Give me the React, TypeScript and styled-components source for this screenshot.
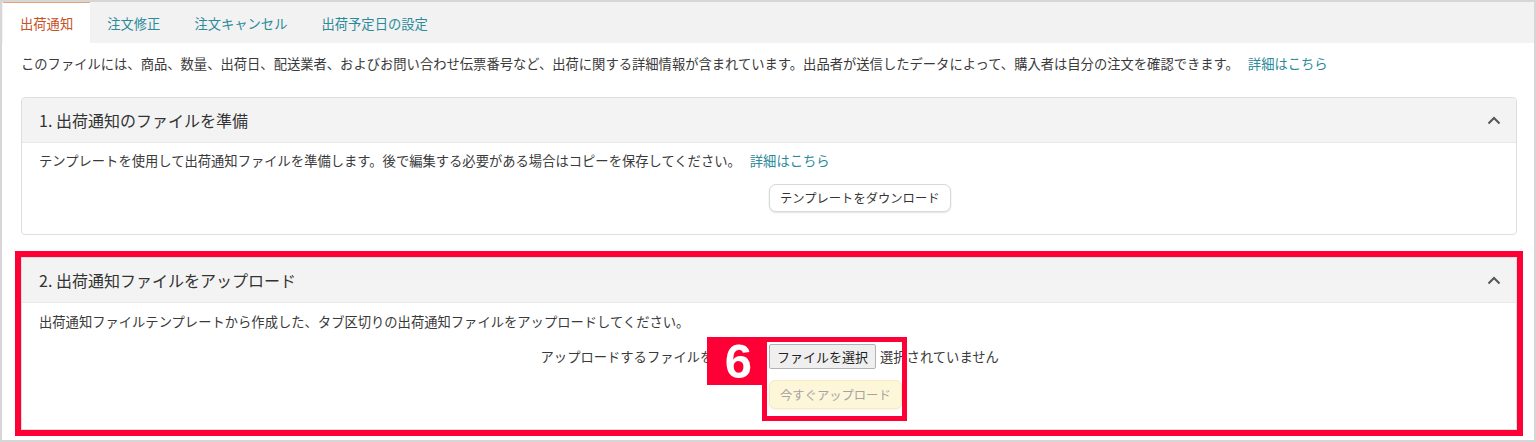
import React from 'react'
import styled, { createGlobalStyle } from 'styled-components'

// Global
const GlobalStyle = createGlobalStyle`
  html, body {
    margin: 0;
    padding: 0;
    background: #fff;
    overflow: hidden;
  }
  body {
    font-family: "Noto Sans CJK JP", "Noto Sans", sans-serif;
    color: #3a3a3a;
  }
`

const HIGHLIGHT = '#fe0035'
const LINK = '#2b8a9b'

// Styled Components
const Frame = styled.div`
  width: 1536px;
  height: 442px;
  box-sizing: border-box;
  border: 2px solid #d6d6d6;
  display: flex;
  flex-direction: column;
`

const TabBar = styled.div`
  display: flex;
  height: 41px;
  padding-left: 1px;
  background: #f2f2f2;
`

const Tab = styled.div<{ $active?: boolean }>`
  display: flex;
  align-items: center;
  padding: 0 17px;
  font-size: 13.3px;
  color: ${({ $active }) => ($active ? '#c7511f' : LINK)};
  background: ${({ $active }) => ($active ? '#fff' : 'transparent')};
  border-top: 1px solid ${({ $active }) => ($active ? '#e9a27a' : 'transparent')};
`

const Content = styled.div`
  padding: 0 17px 0 19px;
`

const Intro = styled.p`
  margin: 0;
  padding-top: 11px;
  font-size: 13.3px;
  line-height: 20px;
  color: #3a3a3a;
`

const Link = styled.a`
  color: ${LINK};
  text-decoration: none;
  margin-left: 9px;
`

const Panel = styled.section<{ $highlight?: boolean }>`
  margin-top: ${({ $highlight }) => ($highlight ? '22px' : '23px')};
  border: 1px solid #dedede;
  border-radius: ${({ $highlight }) => ($highlight ? '0' : '4px')};
  outline: ${({ $highlight }) => ($highlight ? `6px solid ${HIGHLIGHT}` : 'none')};
`

const PanelHeader = styled.header<{ $highlight?: boolean }>`
  height: 44px;
  display: flex;
  align-items: center;
  justify-content: space-between;
  padding: 0 17px;
  background: #f3f3f3;
  border-bottom: 1px solid #e8e8e8;
  font-size: 16px;
  color: #333;
  border-radius: ${({ $highlight }) => ($highlight ? '0' : '4px 4px 0 0')};
`

const Chevron = styled.svg`
  width: 14px;
  height: 9px;
  margin-right: -2px;
`

const PanelBody = styled.div<{ $bottom: number; $top: number }>`
  padding: ${({ $top, $bottom }) => `${$top}px 17px ${$bottom}px`};
`

const BodyText = styled.p`
  margin: 0;
  font-size: 13.3px;
  line-height: 20px;
  color: #3a3a3a;
`

const FormGrid = styled.div<{ $top: number }>`
  display: grid;
  grid-template-columns: 1fr 1fr;
  margin-top: ${({ $top }) => $top}px;
`

const FieldLabel = styled.div`
  text-align: right;
  padding-right: 29px;
  font-size: 13.3px;
  line-height: 25px;
  color: #3a3a3a;
`

const Control = styled.div`
  position: relative;
  display: flex;
  flex-direction: column;
  align-items: flex-start;
  gap: 11px;
`

const SecondaryButton = styled.button`
  height: 28px;
  padding: 0 10px;
  box-sizing: border-box;
  font-family: inherit;
  font-size: 12.3px;
  color: #333;
  background: #fff;
  border: 1px solid #d5d9d9;
  border-radius: 7px;
  box-shadow: 0 1px 2px rgba(15, 17, 17, 0.12);
`

const FileRow = styled.div`
  display: flex;
  align-items: center;
  height: 25px;
`

const FileButton = styled.button`
  height: 25px;
  box-sizing: border-box;
  padding: 0 7px;
  font-family: inherit;
  font-size: 13px;
  color: #222;
  background: #efefef;
  border: 1px solid #b3b3b3;
  border-radius: 2px;
`

const FileStatus = styled.span`
  margin-left: 4px;
  font-size: 13.3px;
  color: #3a3a3a;
`

const UploadButton = styled.button`
  height: 29px;
  padding: 0 10px;
  box-sizing: border-box;
  font-family: inherit;
  font-size: 12.3px;
  color: #a3a3a3;
  background: #fdf6d9;
  border: 1px solid #f6ebbd;
  border-radius: 6px;
  box-shadow: 0 1px 2px rgba(200, 180, 100, 0.15);
`

// overlays: step number + callout frame
const StepBadge = styled.div`
  position: absolute;
  left: -62px;
  top: -7px;
  width: 57px;
  height: 48px;
  box-sizing: border-box;
  padding-left: 6px;
  background: ${HIGHLIGHT};
  color: #fff;
  display: flex;
  align-items: center;
  justify-content: center;
  font-family: "Liberation Sans", Arial, sans-serif;
  font-weight: 700;
  font-size: 49px;
  line-height: 1;
  z-index: 2;
`

const CalloutBox = styled.div`
  position: absolute;
  left: -7px;
  top: -7px;
  width: 145px;
  height: 84px;
  box-sizing: border-box;
  border: 5px solid ${HIGHLIGHT};
  pointer-events: none;
  z-index: 1;
`

const ChevronUp = () => (
  <Chevron viewBox="0 0 14 9">
    <polyline points="1.5,7.5 7,2 12.5,7.5" fill="none" stroke="#555" strokeWidth="2" />
  </Chevron>
)

const tabs = ['出荷通知', '注文修正', '注文キャンセル', '出荷予定日の設定']

// React Component
const App: React.FC = () => {
  return (
    <>
      <GlobalStyle />
      <Frame>
        <TabBar>
          {tabs.map((t, i) => (
            <Tab key={t} $active={i === 0}>
              {t}
            </Tab>
          ))}
        </TabBar>
        <Content>
          <Intro>
            このファイルには、商品、数量、出荷日、配送業者、およびお問い合わせ伝票番号など、出荷に関する詳細情報が含まれています。出品者が送信したデータによって、購入者は自分の注文を確認できます。
            <Link>詳細はこちら</Link>
          </Intro>

          <Panel>
            <PanelHeader>
              <span>1. 出荷通知のファイルを準備</span>
              <ChevronUp />
            </PanelHeader>
            <PanelBody $top={8} $bottom={22}>
              <BodyText>
                テンプレートを使用して出荷通知ファイルを準備します。後で編集する必要がある場合はコピーを保存してください。
                <Link>詳細はこちら</Link>
              </BodyText>
              <FormGrid $top={13}>
                <div />
                <Control>
                  <SecondaryButton>テンプレートをダウンロード</SecondaryButton>
                </Control>
              </FormGrid>
            </PanelBody>
          </Panel>

          <Panel $highlight>
            <PanelHeader $highlight>
              <span>2. 出荷通知ファイルをアップロード</span>
              <ChevronUp />
            </PanelHeader>
            <PanelBody $top={9} $bottom={20}>
              <BodyText>出荷通知ファイルテンプレートから作成した、タブ区切りの出荷通知ファイルをアップロードしてください。</BodyText>
              <FormGrid $top={12}>
                <FieldLabel>アップロードするファイルを選択</FieldLabel>
                <Control>
                  <FileRow>
                    <FileButton>ファイルを選択</FileButton>
                    <FileStatus>選択されていません</FileStatus>
                  </FileRow>
                  <UploadButton>今すぐアップロード</UploadButton>
                  <CalloutBox />
                  <StepBadge>6</StepBadge>
                </Control>
              </FormGrid>
            </PanelBody>
          </Panel>
        </Content>
      </Frame>
    </>
  )
}

export default App
